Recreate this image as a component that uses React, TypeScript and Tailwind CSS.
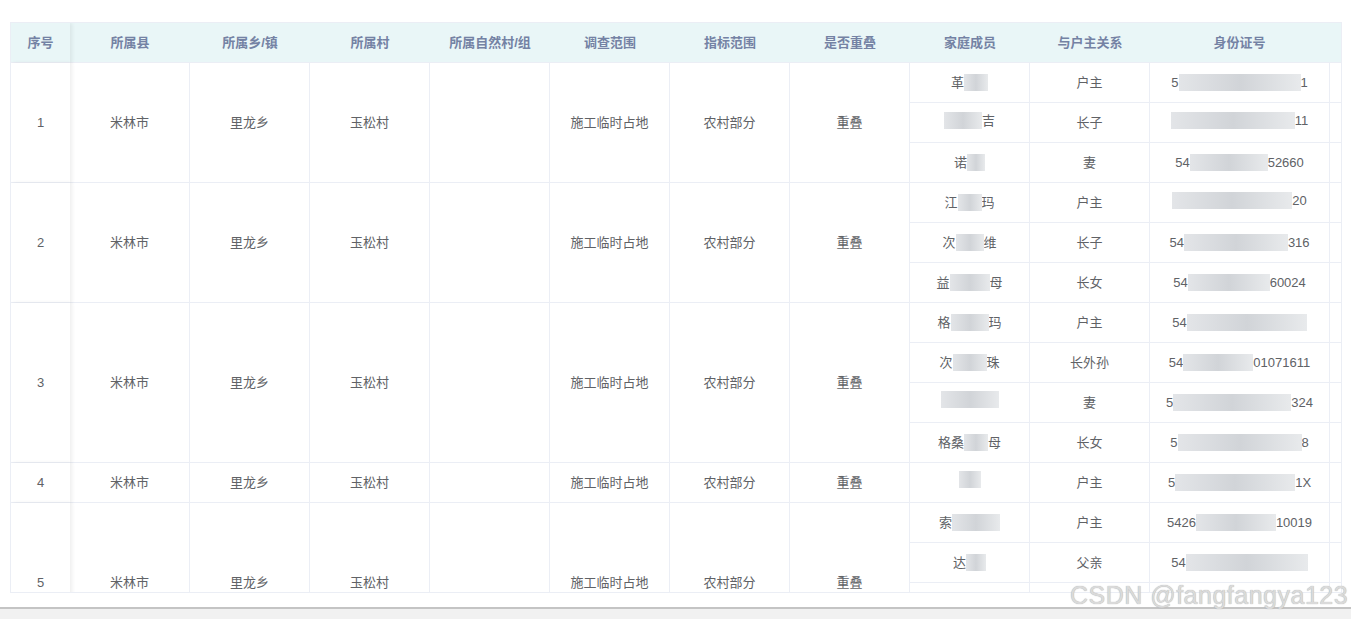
import React from "react";

type Piece = string | number;
type Member = { name: Piece[]; rel: string; id: Piece[] };
type Group = { no: number; members: Member[] };

const groups: Group[] = [
  {
    no: 1,
    members: [
      { name: ["革", 24], rel: "户主", id: ["5", 122, "1"] },
      { name: [38, "吉"], rel: "长子", id: [124, "11"] },
      { name: ["诺", 18], rel: "妻", id: ["54", 78, "52660"] },
    ],
  },
  {
    no: 2,
    members: [
      { name: ["江", 24, "玛"], rel: "户主", id: [120, "20"] },
      { name: ["次", 28, "维"], rel: "长子", id: ["54", 104, "316"] },
      { name: ["益", 40, "母"], rel: "长女", id: ["54", 82, "60024"] },
    ],
  },
  {
    no: 3,
    members: [
      { name: ["格", 38, "玛"], rel: "户主", id: ["54", 120] },
      { name: ["次", 34, "珠"], rel: "长外孙", id: ["54", 70, "01071611"] },
      { name: [58], rel: "妻", id: ["5", 118, "324"] },
      { name: ["格桑", 24, "母"], rel: "长女", id: ["5", 124, "8"] },
    ],
  },
  {
    no: 4,
    members: [{ name: [22], rel: "户主", id: ["5", 120, "1X"] }],
  },
  {
    no: 5,
    members: [
      { name: ["索", 48], rel: "户主", id: ["5426", 80, "10019"] },
      { name: ["达", 20], rel: "父亲", id: ["54", 122] },
      { name: [], rel: "", id: [] },
      { name: [], rel: "", id: [] },
    ],
  },
];

function Blur({ w }: { w: number }) {
  return (
    <span
      className="inline-block align-middle h-[17px] bg-linear-to-r from-[#e3e5e8] via-[#d1d4d8] to-[#e8eaec] blur-[0.6px]"
      style={{ width: w }}
    />
  );
}

function Pieces({ p }: { p: Piece[] }) {
  return (
    <span className="inline-flex items-center whitespace-nowrap">
      {p.map((x, i) =>
        typeof x === "number" ? <Blur key={i} w={x} /> : <span key={i}>{x}</span>
      )}
    </span>
  );
}

const headers = [
  "序号",
  "所属县",
  "所属乡/镇",
  "所属村",
  "所属自然村/组",
  "调查范围",
  "指标范围",
  "是否重叠",
  "家庭成员",
  "与户主关系",
];

const cell = "h-[40px] border-r border-b border-[#ebeef5] text-center align-middle p-0";

export default function App() {
  return (
    <div
      className="relative w-[1351px] h-[619px] bg-white flex flex-col overflow-hidden"
      style={{ fontFamily: '"Liberation Sans", "Noto Sans CJK SC", sans-serif' }}
    >
      <div className="pt-[22px] pl-[10px] h-[607px]">
        <div className="w-[1332px] h-[571px] overflow-hidden border border-[#ebeef5] border-r-0">
          <table className="table-fixed w-[1331px] border-separate border-spacing-0 text-[13px] text-[#606266]">
            <colgroup>
              <col className="w-[59px]" />
              {Array.from({ length: 9 }).map((_, i) => (
                <col key={i} className="w-[120px]" />
              ))}
              <col className="w-[180px]" />
              <col className="w-[12px]" />
            </colgroup>
            <thead>
              <tr>
                {headers.map((h, i) => (
                  <th
                    key={h}
                    className={`h-[40px] bg-[#e9f6f7] border-b border-[#ebeef5] text-center font-bold text-[#7482a4] p-0 ${
                      i === 0 ? "relative z-10 shadow-[2px_0_4px_rgba(0,0,0,0.07)]" : ""
                    }`}
                  >
                    {h}
                  </th>
                ))}
                <th
                  colSpan={2}
                  className="h-[40px] bg-[#e9f6f7] border-b border-r border-[#ebeef5] text-center font-bold text-[#7482a4] p-0 pr-[12px]"
                >
                  身份证号
                </th>
              </tr>
            </thead>
            <tbody>
              {groups.map((g) =>
                g.members.map((m, mi) => (
                  <tr key={`${g.no}-${mi}`}>
                    {mi === 0 && (
                      <>
                        <td
                          rowSpan={g.members.length}
                          className={`${cell} border-r-0 bg-white relative z-10 shadow-[2px_0_4px_rgba(0,0,0,0.07)]`}
                        >
                          {g.no}
                        </td>
                        <td rowSpan={g.members.length} className={cell}>米林市</td>
                        <td rowSpan={g.members.length} className={cell}>里龙乡</td>
                        <td rowSpan={g.members.length} className={cell}>玉松村</td>
                        <td rowSpan={g.members.length} className={cell}></td>
                        <td rowSpan={g.members.length} className={cell}>施工临时占地</td>
                        <td rowSpan={g.members.length} className={cell}>农村部分</td>
                        <td rowSpan={g.members.length} className={cell}>重叠</td>
                      </>
                    )}
                    <td className={cell}>
                      <Pieces p={m.name} />
                    </td>
                    <td className={cell}>{m.rel}</td>
                    <td className={cell}>
                      <Pieces p={m.id} />
                    </td>
                    <td className={cell}></td>
                  </tr>
                ))
              )}
            </tbody>
          </table>
        </div>
      </div>
      <div className="flex-1 bg-[#f1f1f1] border-t-[2px] border-[#c4c4c4]" />
      <div
        className="absolute left-[1070px] top-[580px] text-[25px] leading-[30px] text-[#dadada] tracking-[0.5px] [text-shadow:0_0_1px_#a0a0a0]"
        style={{ fontFamily: '"Liberation Sans", sans-serif' }}
      >
        CSDN @fangfangya123
      </div>
    </div>
  );
}
